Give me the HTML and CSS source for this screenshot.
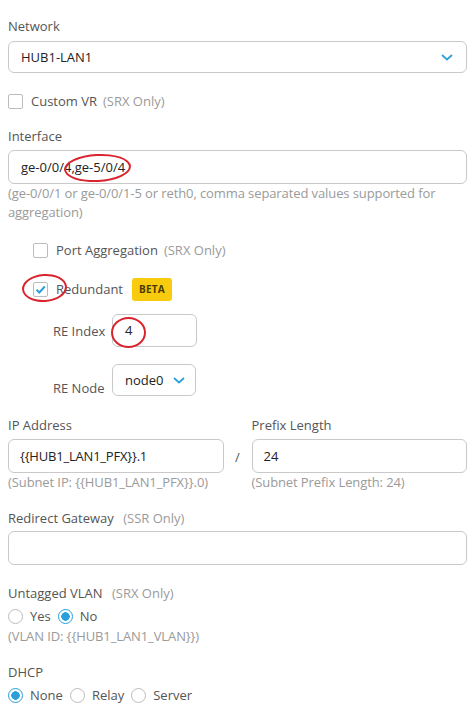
FILE: index.html
```html
<!DOCTYPE html>
<html>
<head>
<meta charset="utf-8">
<link rel="stylesheet" href="styles.css">
</head>
<body>
<div class="page">
  <div class="label first">Network</div>
  <div class="box select">
    <span class="val">HUB1-LAN1</span>
    <svg class="chev" width="12" height="7" viewBox="0 0 12 7"><path d="M1 1 L6 5.5 L11 1" fill="none" stroke="#2a9fdc" stroke-width="1.7"/></svg>
  </div>

  <div class="check-row vr">
    <span class="cb"></span>
    <span class="cb-label">Custom VR</span>
    <span class="note">(SRX Only)</span>
  </div>

  <div class="label">Interface</div>
  <div class="box input"><span class="val">ge-0/0/4,ge-5/0/4</span></div>
  <div class="help">(ge-0/0/1 or ge-0/0/1-5 or reth0, comma separated values supported for aggregation)</div>

  <div class="check-row indent pa">
    <span class="cb"></span>
    <span class="cb-label">Port Aggregation</span>
    <span class="note">(SRX Only)</span>
  </div>

  <div class="check-row indent red">
    <span class="cb checked"><svg width="13" height="13" viewBox="0 0 13 13"><path d="M2.5 6.8 L5.3 9.5 L10.8 3.5" fill="none" stroke="#2a9fdc" stroke-width="2"/></svg></span>
    <span class="cb-label">Redundant</span>
    <span class="beta">BETA</span>
  </div>

  <div class="sub-row idx">
    <span class="sub-label">RE Index</span>
    <div class="box small-input"><span class="val">4</span></div>
  </div>
  <div class="sub-row node">
    <span class="sub-label low">RE Node</span>
    <div class="box small-select">
      <span class="val">node0</span>
      <svg class="chev" width="12" height="7" viewBox="0 0 12 7"><path d="M1 1 L6 5.5 L11 1" fill="none" stroke="#2a9fdc" stroke-width="1.7"/></svg>
    </div>
  </div>

  <div class="ip-grid">
    <div class="col">
      <div class="label">IP Address</div>
      <div class="box input"><span class="val tight">{{HUB1_LAN1_PFX}}.1</span></div>
      <div class="help">(Subnet IP: {{HUB1_LAN1_PFX}}.0)</div>
    </div>
    <div class="slash">/</div>
    <div class="col">
      <div class="label">Prefix Length</div>
      <div class="box input"><span class="val">24</span></div>
      <div class="help">(Subnet Prefix Length: 24)</div>
    </div>
  </div>

  <div class="label gw">Redirect Gateway <span class="note">(SSR Only)</span></div>
  <div class="box input"></div>

  <div class="label vlan">Untagged VLAN <span class="note">(SRX Only)</span></div>
  <div class="radio-row">
    <span class="radio"></span><span class="r-label">Yes</span>
    <span class="radio on"></span><span class="r-label">No</span>
  </div>
  <div class="help">(VLAN ID: {{HUB1_LAN1_VLAN}})</div>

  <div class="label dhcp">DHCP</div>
  <div class="radio-row">
    <span class="radio on"></span><span class="r-label">None</span>
    <span class="radio"></span><span class="r-label">Relay</span>
    <span class="radio"></span><span class="r-label">Server</span>
  </div>

  <div class="mark mark-iface"></div>
  <div class="mark mark-red"></div>
  <div class="mark mark-idx"></div>
</div>
</body>
</html>
```
FILE: styles.css
```css
* { box-sizing: border-box; }
html, body { margin: 0; padding: 0; background: #fff; }
body {
  font-family: "Open Sans", "Noto Sans", sans-serif;
  font-size: 13px;
  line-height: 19px;
  color: #555;
}
.page {
  position: relative;
  width: 474px;
  height: 724px;
  padding: 17px 7px 0 8px;
  overflow: hidden;
}
.label { height: 19px; color: #555; }
.note { color: #9a9a9a; margin-left: 6px; }
.box {
  border: 1px solid #c9c9c9;
  border-radius: 6px;
  background: #fff;
  display: flex;
  align-items: center;
  padding: 0 12px;
  color: #222;
}
.select { margin-top: 5px; height: 32px; justify-content: space-between; }
.select .chev { margin-right: 1px; }
.input { margin-top: 4px; height: 34px; }
.val { color: #222; }
.help { color: #9a9a9a; letter-spacing: -0.1px; }

.check-row { display: flex; align-items: center; height: 20px; }
.cb {
  width: 15px; height: 15px;
  border: 1px solid #bcbcbc;
  border-radius: 2px;
  display: flex; align-items: center; justify-content: center;
  margin-right: 8px;
}
.cb-label { color: #555; }
.vr { margin-top: 18px; }
.vr + .label { margin-top: 16px; }
.indent { padding-left: 25px; }
.pa { margin-top: 18px; }
.red { margin-top: 19px; }
.beta {
  margin-left: 9px;
  background: #f8cb0e;
  color: #4a3b00;
  font-size: 10px;
  font-weight: 700;
  line-height: 23px;
  height: 23px;
  padding: 0 7px;
  border-radius: 3px;
  letter-spacing: 0.2px;
}

.sub-row { display: flex; padding-left: 45px; }
.sub-label { width: 59px; align-self: center; padding-top: 2px; }
.sub-label.low { align-self: flex-end; padding-top: 0; margin-bottom: -2px; }
.idx { margin-top: 15px; }
.small-input { width: 85px; height: 33px; }
.node { margin-top: 17px; }
.small-select { width: 84px; height: 32px; justify-content: space-between; padding: 0 10px 0 12px; }

.ip-grid { display: flex; margin-top: 20px; }
.ip-grid .col { flex: 1 1 0; }
.ip-grid .col .input { padding-left: 11px; }
.slash { width: 28px; text-align: center; padding-top: 24px; line-height: 34px; color: #555; }
.tight { letter-spacing: -0.2px; }
.gw { margin-top: 17px; }
.gw + .input { margin-top: 3px; }
.vlan { margin-top: 19px; }
.dhcp { margin-top: 17px; }

.radio-row { display: flex; align-items: center; height: 22px; margin-top: 2px; }
.radio {
  width: 15px; height: 15px;
  border: 1px solid #bcbcbc;
  border-radius: 50%;
  margin-right: 7px;
  background: #fff;
}
.radio.on {
  border: 1.5px solid #2a9fdc;
  background: radial-gradient(circle, #2a9fdc 0 4px, #fff 4.5px);
}
.r-label { margin-right: 7px; color: #555; }

.mark {
  position: absolute;
  border: 2px solid #d9232d;
  border-radius: 50%;
}
.mark-iface { left: 64px; top: 154px; width: 67px; height: 28px; transform: rotate(-3deg); }
.mark-red { left: 22px; top: 274px; width: 45px; height: 28px; transform: rotate(-4deg); }
.mark-idx { left: 111px; top: 317px; width: 35px; height: 31px; }
```
